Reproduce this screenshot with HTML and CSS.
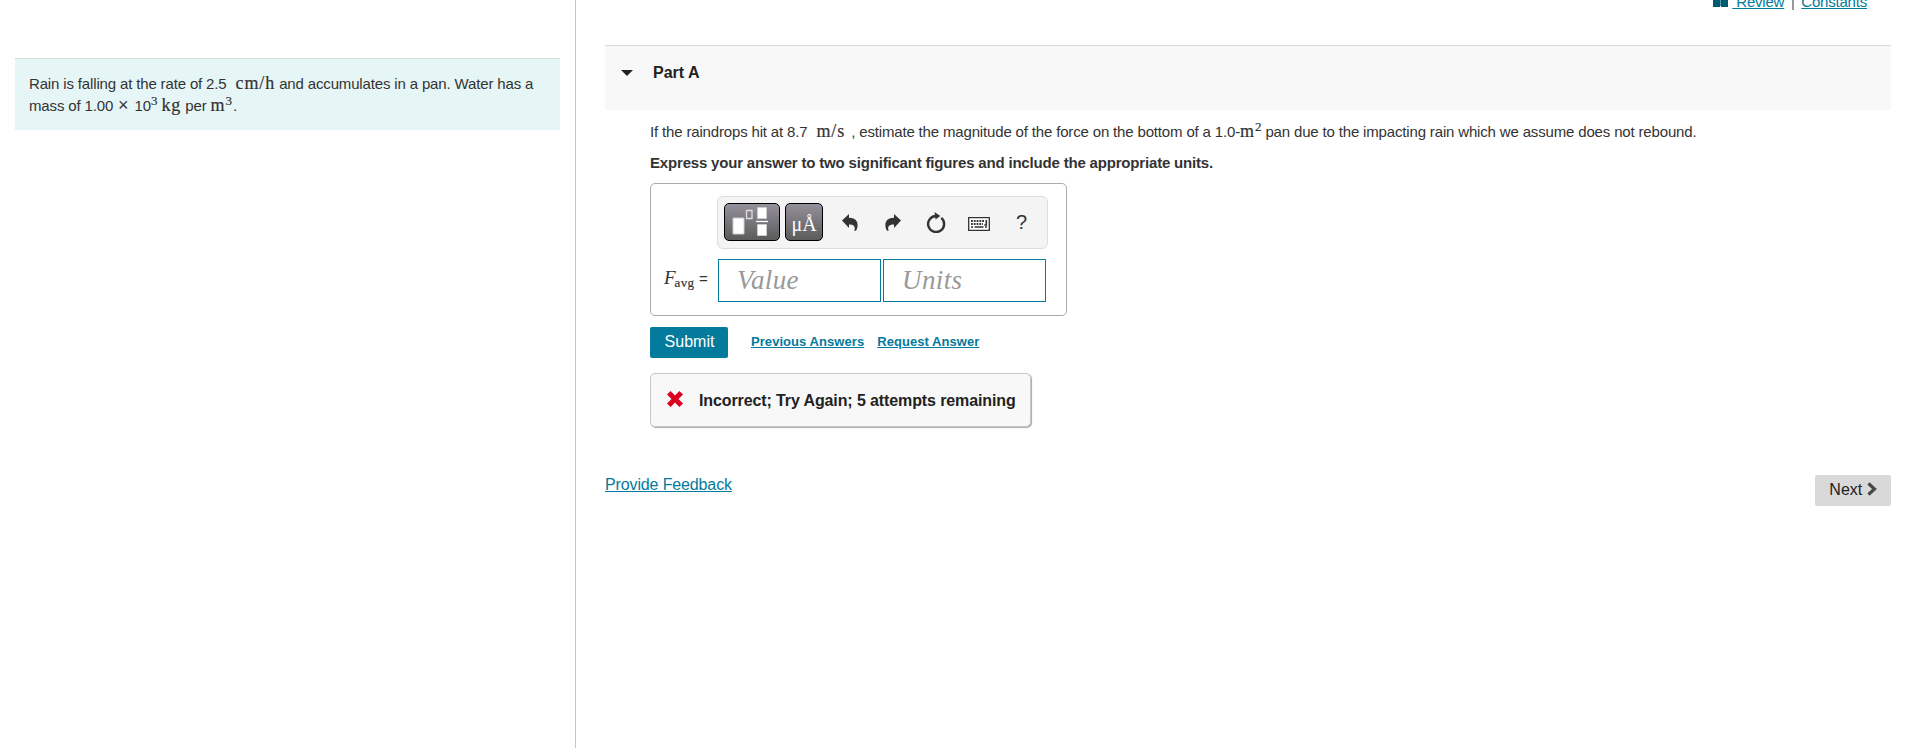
FILE: index.html
```html
<!DOCTYPE html>
<html lang="en">
<head>
    <meta charset="UTF-8">
    <meta name="viewport" content="width=device-width, initial-scale=1.0">
    <title>Part A</title>
    <link rel="stylesheet" href="styles.css">
</head>
<body>
    <aside class="sidebar">
        <div class="intro">
            Rain is falling at the rate of 2.5 <span class="math unit">cm/h</span> and accumulates in a pan. Water has a<br>mass of 1.00 <span class="times">×</span> 10<sup class="math">3</sup> <span class="math">kg</span> per <span class="math cubed">m<sup>3</sup></span> .
        </div>
    </aside>

    <main class="content">
        <div class="top-links">
            <svg class="book" width="15" height="12" viewBox="0 0 15 12">
                <path d="M0 0h7v12H0zM8 0h7v12H8z" fill="#005a70"/>
                <path d="M7 0h1v11H7z" fill="#5b9aaa"/>
            </svg>
            <a href="#" class="review">&nbsp;Review</a>
            <span class="bar"></span>
            <a href="#">Constants</a>
        </div>

        <div class="part-header">
            <span class="arrow"></span>
            <h2>Part A</h2>
        </div>

        <div class="part-body">
            <p class="question">If the raindrops hit at 8.7 <span class="math unit">m/s</span> , estimate the magnitude of the force on the bottom of a 1.0-<span class="math">m<sup>2</sup></span> pan due to the impacting rain which we assume does not rebound.</p>
            <p class="instructions">Express your answer to two significant figures and include the appropriate units.</p>

            <div class="answer-box">
                <div class="toolbar">
                    <button class="tool template" aria-label="Templates">
                        <svg width="54" height="36" viewBox="0 0 54 36">
                            <path d="M8 14h11v16H8z" fill="#fff" stroke="#ccc"/>
                            <path d="M21.500 6.500h5.500v8h-5.500z" fill="none" stroke="#ddd" stroke-width="1.300"/>
                            <path d="M32.500 3.500h9v11h-9zM32.500 20.500h9v11h-9z" fill="#fff" stroke="#ccc"/>
                            <path d="M31 17.500h12" stroke="#fff" stroke-width="1.300"/>
                        </svg>
                    </button>
                    <button class="tool symbols">μÅ</button>
                    <button class="icon undo" aria-label="Undo">
                        <svg width="16" height="17" viewBox="0 0 16 17"><path d="M0 6.500 7 0v3.700c6 .1 8.600 3 8.600 7.300 0 2.400-.7 4.400-1.700 5.800h-1.600c1.300-3.800.4-6.400-5.300-6.400V14z" fill="#333"/></svg>
                    </button>
                    <button class="icon redo" aria-label="Redo">
                        <svg width="16" height="17" viewBox="0 0 16 17"><path d="M16 6.500 9 0v3.700C3 3.800.4 6.700.4 11c0 2.400.7 4.400 1.700 5.800h1.600C2.400 13 3.300 10.400 9 10.400V14z" fill="#333"/></svg>
                    </button>
                    <button class="icon reset" aria-label="Reset">
                        <svg width="20" height="21" viewBox="0 0 20 21"><path d="M15.300 5.900A8 8 0 1 1 10.500 4" fill="none" stroke="#333" stroke-width="2.400"/><path d="M8.500 0 14.300 3.900 9.500 7.500z" fill="#333"/></svg>
                    </button>
                    <button class="icon keyboard" aria-label="Keyboard">
                        <svg width="22" height="14" viewBox="0 0 22 14">
                            <path d="M.7.7h20.600v12.600H.7z" fill="#fff" stroke="#333" stroke-width="1.300"/>
                            <path d="M3 4h14M3 7h12" stroke="#333" stroke-width="1.800" stroke-dasharray="1.800 1"/>
                            <path d="M3 10h2M6.500 10h9M17 10h2M18.300 3v5h-2" fill="none" stroke="#333" stroke-width="1.600"/>
                        </svg>
                    </button>
                    <button class="icon help">?</button>
                </div>
                <div class="answer-row">
                    <label><i>F</i><sub>avg</sub> <span class="eq">=</span></label>
                    <input type="text" placeholder="Value">
                    <input type="text" placeholder="Units">
                </div>
            </div>

            <div class="actions">
                <button class="submit">Submit</button>
                <a href="#" class="previous">Previous Answers</a>
                <a href="#" class="request">Request Answer</a>
            </div>

            <div class="feedback">
                <svg width="16" height="16" viewBox="0 0 16 16"><path d="M3.600 0 8 4.500 12.400 0 16 3.500 11.500 8 16 12.500 12.400 16 8 11.500 3.600 16 0 12.500 4.500 8 0 3.500z" fill="#db0020"/></svg>
                <span>Incorrect; Try Again; 5 attempts remaining</span>
            </div>
        </div>

        <div class="footer">
            <a href="#">Provide Feedback</a>
            <button class="next">Next
                <svg width="10" height="14" viewBox="0 0 10 14"><path d="M1.500 1.500 7.500 7l-6 5.500" fill="none" stroke="#484848" stroke-width="3.200"/></svg>
            </button>
        </div>
    </main>
</body>
</html>
```
FILE: styles.css
```css
* {
    box-sizing: border-box;
}

body {
    margin: 0;
    height: 748px;
    display: flex;
    overflow: hidden;
    background-color: #fff;
    color: #333;
    font-family: "Liberation Sans", Arial, sans-serif;
    font-size: 15px;
}

a {
    color: #047a9c;
    text-decoration: underline;
}

button {
    font-family: inherit;
    border: none;
    padding: 0;
}

.sidebar {
    width: 576px;
    padding: 58px 15px 0;
    border-right: 1px solid #b8c8dc;
}

.intro {
    height: 72px;
    padding: 14px 0 0 14px;
    border-top: 1px solid #d9dcdc;
    background-color: #e6f6f6;
    letter-spacing: -0.15px;
    line-height: 22px;
    white-space: nowrap;
}

.math {
    font-family: "Liberation Serif", "Times New Roman", serif;
    font-size: 18px;
    letter-spacing: 0.9px;
    line-height: 0;
    -webkit-text-stroke: 0.2px #333;
}

.times {
    margin: 0 2px 0 1px;
    font-size: 18px;
    line-height: 0;
}

sup {
    line-height: 0;
    vertical-align: 6px;
}

.math sup,
sup.math {
    font-size: 13px;
    letter-spacing: 0;
}

.unit {
    margin-left: 5px;
    margin-right: 2px;
}

.intro .unit {
    margin-right: 0;
}

.cubed {
    margin-right: -3px;
}

.content {
    flex: 1;
    padding: 0 29px;
}

.top-links {
    height: 45px;
    display: flex;
    justify-content: flex-end;
    padding-right: 24px;
    letter-spacing: -0.2px;
    line-height: 18px;
}

.top-links a {
    margin-top: -7px;
}

.book {
    margin: -5px 4px 0 0;
}

.bar {
    width: 2px;
    height: 10px;
    margin: 0 7px 0 8px;
    background-color: #999;
}

.part-header {
    height: 65px;
    display: flex;
    padding: 17px 0 0 15px;
    border-top: 1px solid #d9d9d9;
    background-color: #f8f8f8;
}

.arrow {
    width: 12px;
    height: 6px;
    margin: 7px 20px 0 1px;
    background-color: #222;
    clip-path: polygon(0 0, 100% 0, 50% 100%);
}

.part-header h2 {
    margin: 0;
    color: #222;
    font-size: 16px;
    line-height: 20px;
}

.part-body {
    padding: 11px 0 0 45px;
}

.question,
.instructions {
    margin: 0;
    line-height: 22px;
    white-space: nowrap;
}

.question {
    letter-spacing: -0.16px;
}

.instructions {
    margin-top: 9px;
    font-weight: bold;
    letter-spacing: -0.18px;
}

.answer-box {
    width: 417px;
    height: 133px;
    margin-top: 9px;
    padding: 12px 0 0 13px;
    border: 1px solid #aaa;
    border-radius: 5px;
}

.toolbar {
    width: 331px;
    height: 53px;
    margin-left: 53px;
    padding: 6px 0 6px 6px;
    display: flex;
    border: 1px solid #ddd;
    border-radius: 6px;
    background-color: #f4f4f4;
}

.tool {
    height: 38px;
    border: 1px solid #000;
    border-radius: 5px;
    background-image: linear-gradient(#94909c, #5b5b5b);
    color: #fff;
}

.template {
    width: 56px;
}

.template svg {
    display: block;
}

.symbols {
    width: 38px;
    margin: 0 0 0 5px;
    padding-top: 4px;
    font-family: "Liberation Serif", serif;
    font-size: 20px;
}

.icon {
    width: 43px;
    height: 38px;
    display: flex;
    justify-content: center;
    align-items: center;
    background: none;
    color: #333;
    font-size: 20px;
}

.undo {
    margin-left: 5px;
}

.keyboard {
    padding-top: 4px;
}

.answer-row {
    display: flex;
    gap: 2px;
    margin-top: 10px;
}

.answer-row label {
    width: 52px;
    padding-top: 7px;
    font-family: "Liberation Serif", serif;
    font-size: 19px;
    line-height: 24px;
    white-space: nowrap;
}

.answer-row sub {
    margin-left: -1px;
    font-size: 13px;
    letter-spacing: 0.3px;
    line-height: 0;
    vertical-align: -3px;
    -webkit-text-stroke: 0.2px #333;
}

.eq {
    font-family: "Liberation Sans", sans-serif;
    font-size: 15px;
}

.answer-row input {
    width: 163px;
    height: 43px;
    padding: 0 0 1px 18px;
    border: 1px solid #047a9c;
    border-radius: 0;
    font-family: "Liberation Serif", "Times New Roman", serif;
    font-size: 27px;
    font-style: italic;
    letter-spacing: 0.4px;
}

.answer-row input::placeholder {
    color: #999;
}

.actions {
    display: flex;
    margin-top: 11px;
    font-size: 13px;
    font-weight: bold;
    line-height: 29px;
}

.actions a {
    letter-spacing: 0.06px;
}

.submit {
    width: 78px;
    height: 31px;
    margin-right: 23px;
    padding: 0 0 2px 1px;
    border-radius: 2px;
    background-color: #047a9c;
    color: #fff;
    font-size: 16px;
}

.request {
    margin-left: 13px;
}

.feedback {
    width: 381px;
    height: 54px;
    margin-top: 15px;
    padding: 1px 0 0 16px;
    display: flex;
    align-items: center;
    gap: 16px;
    border: 1px solid #c7c7c7;
    border-radius: 5px;
    background-color: #f8f8f8;
    box-shadow: 1px 1px 1px #aaa;
    color: #222;
    font-size: 16px;
    font-weight: bold;
    letter-spacing: -0.11px;
    white-space: nowrap;
}

.feedback svg {
    margin-top: -3px;
}

.footer {
    display: flex;
    justify-content: space-between;
    margin-top: 48px;
    font-size: 16px;
    line-height: 19px;
}

.footer a {
    letter-spacing: -0.13px;
}

.next {
    width: 76px;
    height: 31px;
    padding-bottom: 2px;
    border-radius: 2px;
    background-color: #d9d9d9;
    color: #222;
    font-size: 16px;
}

.next svg {
    vertical-align: -1px;
}
```
